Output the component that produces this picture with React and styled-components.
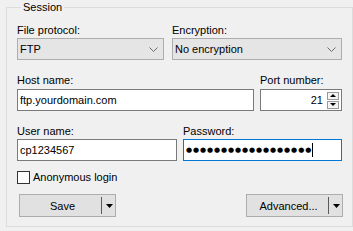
import React from 'react';
import styled, { createGlobalStyle } from 'styled-components';

const GlobalStyle = createGlobalStyle`
  html, body {
    margin: 0;
    padding: 0;
    background: #f0f0f0;
  }
  body {
    font-family: "Liberation Sans", Arial, sans-serif;
    font-size: 11px;
    color: #000;
  }
`;

const Group = styled.fieldset`
  margin: 0 0 0 6px;
  padding: 9px 9px 8px 10px;
  width: 347px;
  height: 227px;
  box-sizing: border-box;
  border: 1px solid #dcdcdc;
  min-inline-size: 0;
`;

const Legend = styled.legend`
  margin-left: 4px;
  padding: 0 2px;
  line-height: 14px;
  font-size: 11px;
`;

const Row = styled.div`
  display: grid;
  grid-template-columns: ${(p) => p.$cols};
  column-gap: ${(p) => p.$gap || 6}px;
  margin-bottom: ${(p) => p.$mb || 0}px;
`;

const Field = styled.div`
  display: flex;
  flex-direction: column;
`;

const Label = styled.div`
  line-height: 14px;
  height: 14px;
  margin-bottom: ${(p) => p.$mb || 1}px;
  white-space: nowrap;
`;

const Combo = styled.div`
  height: 22px;
  box-sizing: border-box;
  border: 1px solid #adadad;
  background: #e5e5e5;
  display: flex;
  align-items: center;
  justify-content: space-between;
  padding: 0 5px 0 2px;
`;

const Input = styled.div`
  height: 22px;
  box-sizing: border-box;
  border: 1px solid ${(p) => (p.$focus ? '#0078d7' : '#7a7a7a')};
  background: #fff;
  display: flex;
  align-items: center;
  justify-content: ${(p) => (p.$right ? 'flex-end' : 'flex-start')};
  padding: 0 2px;
  width: 100%;
`;

const Dots = styled.span`
  font-family: "DejaVu Sans", sans-serif;
  font-size: 7px;
  letter-spacing: 0.9px;
  line-height: 14px;
`;

const Caret = styled.span`
  display: inline-block;
  width: 1px;
  height: 14px;
  background: #000;
`;

const PortValue = styled.span`
  margin-right: 4px;
`;

const Spinner = styled.div`
  display: flex;
  flex-direction: column;
  gap: 1px;
`;

const SpinButton = styled.div`
  width: 12px;
  height: 8px;
  box-sizing: border-box;
  border: 1px solid #9a9a9a;
  background: #f4f4f4;
  display: flex;
  align-items: center;
  justify-content: center;
`;

const CheckRow = styled.label`
  display: flex;
  align-items: center;
  gap: 3px;
  height: 14px;
  margin: 9px 0 10px;
`;

const Box = styled.span`
  width: 13px;
  height: 13px;
  box-sizing: border-box;
  border: 1px solid #333;
  background: #fff;
`;

const Buttons = styled.div`
  display: flex;
  justify-content: space-between;
  padding-left: 2px;
`;

const SplitButton = styled.div`
  width: 97px;
  height: 23px;
  box-sizing: border-box;
  border: 1px solid #adadad;
  background: #e1e1e1;
  display: flex;
  align-items: center;
`;

const ButtonText = styled.span`
  flex: 1;
  text-align: center;
  padding-left: ${(p) => p.$pl || 0}px;
`;

const Divider = styled.span`
  width: 1px;
  height: 17px;
  background: #5a5a5a;
  margin-right: 2px;
`;

const ArrowBox = styled.span`
  width: 11px;
  display: flex;
  justify-content: center;
`;

const Chevron = () => (
  <svg width="9" height="5" viewBox="0 0 9 5">
    <path d="M0.5 0.5 L4.5 4.5 L8.5 0.5" fill="none" stroke="#6d6d6d" strokeWidth="1" />
  </svg>
);

const Tri = ({ up, w = 7 }) => {
  const h = Math.ceil(w / 2);
  return (
    <svg width={w} height={h} viewBox={`0 0 ${w} ${h}`}>
      {up ? (
        <path d={`M0 ${h} L${w / 2} 0 L${w} ${h} Z`} fill="#000" />
      ) : (
        <path d={`M0 0 L${w} 0 L${w / 2} ${h} Z`} fill="#000" />
      )}
    </svg>
  );
};

export default function App() {
  return (
    <>
      <GlobalStyle />
      <Group>
        <Legend>Session</Legend>
        <Row $cols="147px 170px" $gap={8} $mb={13}>
          <Field>
            <Label>File protocol:</Label>
            <Combo>
              <span>FTP</span>
              <Chevron />
            </Combo>
          </Field>
          <Field>
            <Label>Encryption:</Label>
            <Combo>
              <span>No encryption</span>
              <Chevron />
            </Combo>
          </Field>
        </Row>
        <Row $cols="237px 82px" $gap={6} $mb={13}>
          <Field>
            <Label $mb={2}>Host name:</Label>
            <Input>ftp.yourdomain.com</Input>
          </Field>
          <Field>
            <Label $mb={2}>Port number:</Label>
            <Input $right>
              <PortValue>21</PortValue>
              <Spinner>
                <SpinButton><Tri up w={6} /></SpinButton>
                <SpinButton><Tri w={6} /></SpinButton>
              </Spinner>
            </Input>
          </Field>
        </Row>
        <Row $cols="160px 159px" $gap={6}>
          <Field>
            <Label $mb={1}>User name:</Label>
            <Input>cp1234567</Input>
          </Field>
          <Field>
            <Label $mb={1}>Password:</Label>
            <Input $focus>
              <Dots>{'●'.repeat(18)}</Dots>
              <Caret />
            </Input>
          </Field>
        </Row>
        <CheckRow>
          <Box />
          <span>Anonymous login</span>
        </CheckRow>
        <Buttons>
          <SplitButton>
            <ButtonText $pl={4}>Save</ButtonText>
            <Divider />
            <ArrowBox><Tri w={7} /></ArrowBox>
          </SplitButton>
          <SplitButton>
            <ButtonText $pl={2}>Advanced...</ButtonText>
            <Divider />
            <ArrowBox><Tri w={7} /></ArrowBox>
          </SplitButton>
        </Buttons>
      </Group>
    </>
  );
}
